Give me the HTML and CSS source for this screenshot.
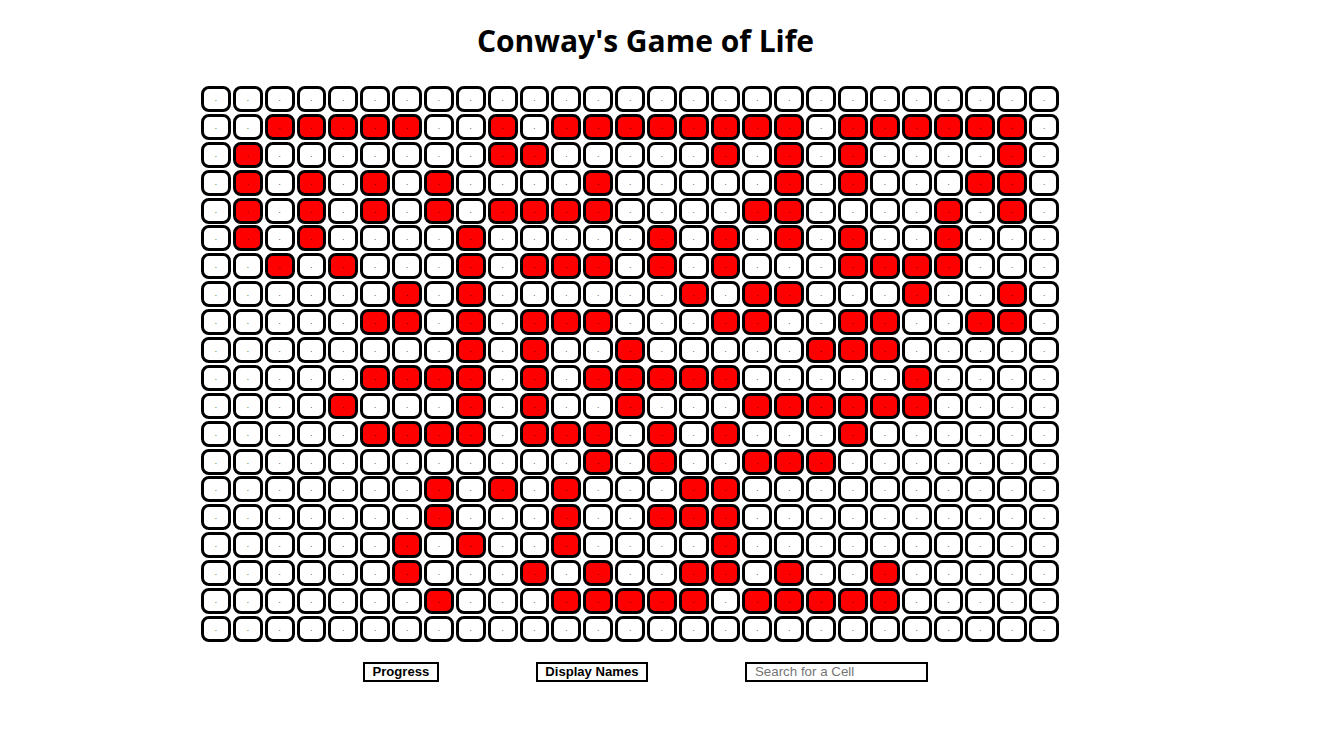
FILE: index.html
```html
<!DOCTYPE html>
<html lang="en">
<head>
<meta charset="utf-8">
<title>Conway's Game of Life</title>
<link rel="stylesheet" href="styles.css">
</head>
<body>
<main class="page">
  <h1 class="title">Conway's Game of Life</h1>
  <div class="board" id="board"></div>
  <div class="controls">
    <button class="btn" type="button">Progress</button>
    <button class="btn" type="button">Display Names</button>
    <input class="search" type="text" placeholder="Search for a Cell">
  </div>
</main>
<script src="script.js"></script>
</body>
</html>
```

FILE: styles.css
```css
html, body {
  margin: 0;
  padding: 0;
  background: #fff;
}

.page {
  padding-right: 46px;
}

.title {
  margin: 21px 0 0;
  text-align: center;
  font-family: "Open Sans", "Noto Sans", sans-serif;
  font-weight: 700;
  font-size: 30px;
  line-height: 40px;
  color: #000;
}

.board {
  display: grid;
  grid-template-columns: repeat(27, 1fr);
  grid-auto-rows: 26px;
  column-gap: 2px;
  row-gap: 1.9px;
  width: 858px;
  margin: 25px 0 0 201px;
}

.cell {
  box-sizing: border-box;
  border: 3px solid #000;
  border-radius: 8px;
  background: #fff;
  font-family: "Liberation Sans", Arial, sans-serif;
  font-size: 8px;
  line-height: 20px;
  text-align: center;
  color: #222;
}

.cell.alive {
  background: #f00;
  color: #000;
}

.controls {
  display: flex;
  justify-content: center;
  align-items: center;
  gap: 97px;
  margin-top: 20px;
}

.btn {
  margin: 0;
  padding: 1px 7.5px;
  border: 2px solid #000;
  border-radius: 0;
  background: #fff;
  color: #000;
  font-family: "Liberation Sans", Arial, sans-serif;
  font-weight: 700;
  font-size: 13.1px;
  line-height: 14px;
}

.search {
  box-sizing: border-box;
  width: 183px;
  height: 20px;
  margin: 0;
  padding: 0 8px;
  border: 2px solid #000;
  border-radius: 0;
  background: #fff;
  font-family: "Liberation Sans", Arial, sans-serif;
  font-size: 13.33px;
  color: #000;
}

.search::placeholder {
  color: #757575;
}
```

FILE: script.js
```js
var rows = [
  "000000000000000000000000000",
  "001111100101111111101111110",
  "010000000110000010101000010",
  "010101010000100000101000110",
  "010101010111100001100001010",
  "010100001000001010101001000",
  "001010001011101010001111000",
  "000000101000000101100010010",
  "000001101011100011001100110",
  "000000001010010000011100000",
  "000001111010111110000010000",
  "000010001010010001111110000",
  "000001111011101010001000000",
  "000000000000101001110000000",
  "000000010101000110000000000",
  "000000010001001110000000000",
  "000000101001000010000000000",
  "000000100010100110100100000",
  "000000010001111101111100000",
  "000000000000000000000000000"
];
var board = document.getElementById("board");
rows.forEach(function (row) {
  for (var i = 0; i < row.length; i++) {
    var cell = document.createElement("div");
    cell.className = row[i] === "1" ? "cell alive" : "cell";
    cell.textContent = ".";
    board.appendChild(cell);
  }
});
```
